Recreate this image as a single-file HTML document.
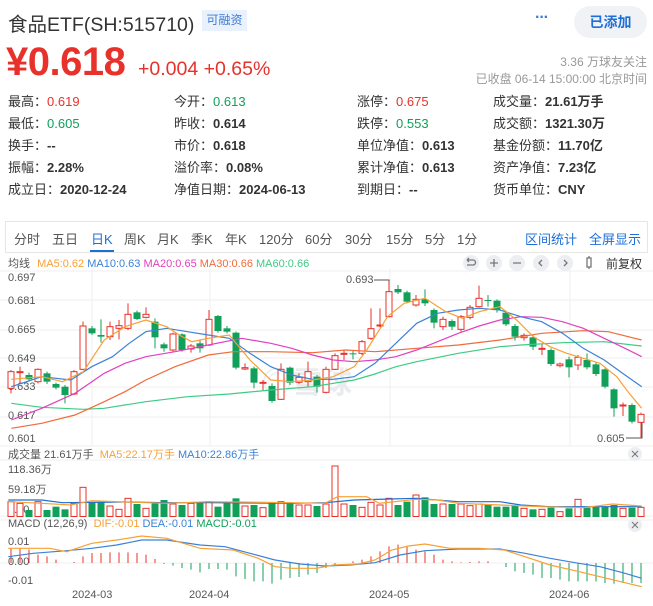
<!DOCTYPE html>
<html><head><meta charset="utf-8">
<style>
*{margin:0;padding:0;box-sizing:border-box}
body{width:653px;height:606px;background:#fff;font-family:"Liberation Sans","Noto Sans CJK SC",sans-serif;color:#333;position:relative;overflow:hidden}
.a{position:absolute;white-space:nowrap}
.st{font-size:13px;line-height:16px}
.st b{font-weight:bold;color:#333}
.r{color:#e8312a}.g{color:#10a05a}
.tab{font-size:13px;color:#555;top:229px}
</style></head><body>
<div class="a" style="left:8px;top:8px;font-size:19.5px;color:#333">食品ETF(SH:515710)</div>
<div class="a" style="left:202px;top:10px;width:45px;height:21px;background:#e9f2fc;color:#3c7bd4;font-size:12px;line-height:21px;text-align:center">可融资</div>
<div class="a" style="left:535px;top:9px;font-size:16px;color:#3c7bd4;font-weight:bold;letter-spacing:-1px">···</div>
<div class="a" style="left:574px;top:6px;width:73px;height:32px;border-radius:16px;background:#f1f2f5;color:#1d6fd8;font-size:14px;font-weight:bold;line-height:32px;text-align:center">已添加</div>
<div class="a r" style="left:6px;top:40px;font-size:40px;font-weight:bold;letter-spacing:-0.5px">¥0.618</div>
<div class="a r" style="left:138px;top:58px;font-size:19.5px">+0.004 +0.65%</div>
<div class="a" style="right:6px;top:53px;font-size:12px;color:#999">3.36 万球友关注</div>
<div class="a" style="right:6px;top:70px;font-size:12px;color:#999">已收盘 06-14 15:00:00 北京时间</div>

<div class="a st" style="left:8px;top:94px">最高：<span class="r">0.619</span></div>
<div class="a st" style="left:8px;top:116px">最低：<span class="g">0.605</span></div>
<div class="a st" style="left:8px;top:138px">换手：<b>--</b></div>
<div class="a st" style="left:8px;top:160px">振幅：<b>2.28%</b></div>
<div class="a st" style="left:8px;top:182px">成立日：<b>2020-12-24</b></div>
<div class="a st" style="left:174px;top:94px">今开：<span class="g">0.613</span></div>
<div class="a st" style="left:174px;top:116px">昨收：<b>0.614</b></div>
<div class="a st" style="left:174px;top:138px">市价：<b>0.618</b></div>
<div class="a st" style="left:174px;top:160px">溢价率：<b>0.08%</b></div>
<div class="a st" style="left:174px;top:182px">净值日期：<b>2024-06-13</b></div>
<div class="a st" style="left:357px;top:94px">涨停：<span class="r">0.675</span></div>
<div class="a st" style="left:357px;top:116px">跌停：<span class="g">0.553</span></div>
<div class="a st" style="left:357px;top:138px">单位净值：<b>0.613</b></div>
<div class="a st" style="left:357px;top:160px">累计净值：<b>0.613</b></div>
<div class="a st" style="left:357px;top:182px">到期日：<b>--</b></div>
<div class="a st" style="left:493px;top:94px">成交量：<b>21.61万手</b></div>
<div class="a st" style="left:493px;top:116px">成交额：<b>1321.30万</b></div>
<div class="a st" style="left:493px;top:138px">基金份额：<b>11.70亿</b></div>
<div class="a st" style="left:493px;top:160px">资产净值：<b>7.23亿</b></div>
<div class="a st" style="left:493px;top:182px">货币单位：<b>CNY</b></div>

<div class="a" style="left:5px;top:221px;width:643px;height:32px;border:1px solid #e6e6e6"></div>
<div class="a tab" style="left:14px">分时</div>
<div class="a tab" style="left:52px">五日</div>
<div class="a tab" style="left:91px;color:#1d6fd8">日K</div>
<div class="a" style="left:90px;top:250px;width:24px;height:2px;background:#1d6fd8"></div>
<div class="a tab" style="left:124px">周K</div>
<div class="a tab" style="left:157px">月K</div>
<div class="a tab" style="left:191px">季K</div>
<div class="a tab" style="left:225px">年K</div>
<div class="a tab" style="left:259px">120分</div>
<div class="a tab" style="left:305px">60分</div>
<div class="a tab" style="left:345px">30分</div>
<div class="a tab" style="left:386px">15分</div>
<div class="a tab" style="left:425px">5分</div>
<div class="a tab" style="left:457px">1分</div>
<div class="a tab" style="left:525px;color:#1d6fd8">区间统计</div>
<div class="a tab" style="left:589px;color:#1d6fd8">全屏显示</div>

<div class="a" style="left:8px;top:255px;font-size:11px;color:#555">均线 <span style="color:#f7a035;margin-left:4px">MA5:0.62</span> <span style="color:#3b82d6">MA10:0.63</span> <span style="color:#e040c0">MA20:0.65</span> <span style="color:#f06a3a">MA30:0.66</span> <span style="color:#3ecb85">MA60:0.66</span></div>
<div class="a" style="left:606px;top:255px;font-size:12px;color:#333">前复权</div>

<svg class="a" style="left:0;top:0" width="653" height="606" id="s">
<g fill="#eceef1"><circle cx="471" cy="263" r="8"/><circle cx="494" cy="263" r="8"/><circle cx="517" cy="263" r="8"/><circle cx="541" cy="263" r="8"/><circle cx="565" cy="263" r="8"/><circle cx="635" cy="454" r="7"/><circle cx="635" cy="525" r="7"/></g>
<g stroke="#777" stroke-width="1.3" fill="none"><path d="M467 260h6a2.5 2.5 0 0 1 0 5h-6M467 260l2-2M467 260l2 2"/><path d="M490 263h8M494 259v8M513 263h8M542 260l-3 3 3 3M564 260l3 3-3 3"/><rect x="587" y="258" width="4" height="9"/><path d="M589 256v2M589 267v2"/><path d="M632 451l6 6M638 451l-6 6M632 522l6 6M638 522l-6 6" stroke-width="1"/></g>
<g stroke="#efefef" stroke-width="1"><path d="M0 271H653M0 300H653M0 330H653M0 358H653M0 387H653M0 417H653M0 446H653"/><path d="M92 268V446M210 268V446M390 268V446M570 268V446"/><path d="M0 460H653M0 516H653M0 520H653M0 563H653"/></g>
<text x="262" y="393" font-size="30" fill="#e9ebef" font-weight="bold" font-family="Liberation Sans,Noto Sans CJK SC,sans-serif">◎雪球</text>
<g font-size="11" fill="#555" font-family="Liberation Sans,sans-serif">
<text x="8" y="281">0.697</text><text x="8" y="304">0.681</text><text x="8" y="333">0.665</text><text x="8" y="362">0.649</text><text x="8" y="390">0.633</text><text x="8" y="419">0.617</text><text x="8" y="442">0.601</text>
<text x="346" y="283">0.693</text><text x="597" y="442">0.605</text>
<text x="8" y="473">118.36万</text><text x="8" y="493">59.18万</text><text x="8" y="513">0.00</text>
<text x="8" y="545">0.01</text><text x="8" y="565">0.00</text><text x="8" y="584">-0.01</text>
<text x="72" y="598">2024-03</text><text x="189" y="598">2024-04</text><text x="369" y="598">2024-05</text><text x="549" y="598">2024-06</text>
</g>
<path d="M374 280H389V291M626 438H642V420" stroke="#555" fill="none" stroke-width="1"/>
<g id="cd"></g>
</svg>
<div class="a" style="left:8px;top:446px;font-size:11px;color:#555">成交量 21.61万手 &nbsp;<span style="color:#f7a035">MA5:22.17万手</span> <span style="color:#3b82d6">MA10:22.86万手</span></div>
<div class="a" style="left:8px;top:518px;font-size:11px;color:#555">MACD (12,26,9) &nbsp;<span style="color:#f7a035">DIF:-0.01</span> <span style="color:#3b82d6">DEA:-0.01</span> <span style="color:#10a05a">MACD:-0.01</span></div>
<script>
var K=[[455,505,450,520,1],[455,458,440,490,1],[465,478,458,485,0],[448,485,445,490,1],[460,485,455,492,0],[492,503,488,508,0],[500,525,495,550,0],[455,522,450,525,1],[318,448,305,450,1],[325,340,318,345,0],[345,350,298,368,0],[320,350,305,360,1],[317,325,300,358,1],[283,325,250,330,1],[277,297,272,300,0],[283,292,262,295,1],[305,352,295,385,0],[373,385,368,395,0],[342,390,338,395,1],[343,390,340,395,0],[378,387,372,398,1],[370,385,360,398,0],[298,375,270,378,1],[288,333,285,338,0],[325,335,318,340,0],[338,443,335,448,0],[443,447,430,450,1],[445,488,440,505,0],[487,490,480,512,1],[498,543,490,548,0],[448,538,430,540,1],[443,488,440,495,0],[472,487,460,492,1],[455,485,425,500,1],[470,500,465,518,0],[448,517,440,520,1],[407,448,400,450,1],[400,402,390,420,1],[400,402,392,418,0],[365,400,360,405,1],[326,355,265,360,1],[315,318,265,322,1],[215,290,185,292,1],[207,217,195,222,0],[217,245,212,250,0],[238,255,225,260,1],[238,250,208,258,0],[270,308,265,325,0],[298,320,290,330,1],[303,320,298,330,0],[290,328,285,335,1],[262,292,255,298,1],[235,260,197,262,1],[240,243,225,260,0],[242,270,238,278,0],[278,313,272,318,0],[318,350,312,362,0],[346,353,340,362,1],[352,380,345,390,0],[385,388,372,405,1],[390,432,385,438,0],[432,437,428,442,1],[418,442,410,472,0],[412,435,405,450,1],[420,442,400,448,0],[433,462,428,468,0],[448,500,445,505,0],[508,565,505,590,0],[555,558,548,588,1],[555,605,550,610,0],[583,607,578,655,1]];
var V=[185,190,210,185,210,200,208,190,142,187,187,198,208,175,192,205,190,180,192,195,190,187,185,200,188,175,198,195,203,190,185,190,195,195,198,192,78,192,195,202,187,195,175,195,185,165,172,192,192,192,192,197,192,192,200,200,197,205,208,208,203,215,205,178,203,200,200,195,205,203,202];
var M=[45,45,40,25,20,10,0,3,20,30,30,32,32,32,30,25,12,-3,-8,-15,-20,-28,-18,-18,-20,-40,-48,-55,-55,-62,-50,-45,-42,-35,-30,-15,-5,0,5,10,20,35,50,55,48,40,35,25,10,5,2,3,5,5,0,-12,-25,-30,-35,-45,-45,-50,-55,-55,-55,-55,-60,-62,-60,-60,-60];
var h='',R='#e8312a',G='#10a05a';
function X(i){return 11+i*9.0}
K.forEach(function(k,i){var x=X(i),c=k[4]?R:G,t=k[0]/3+220,b=k[1]/3+220;
h+='<line x1="'+x+'" x2="'+x+'" y1="'+(k[2]/3+220)+'" y2="'+(k[3]/3+220)+'" stroke="'+c+'"/>';
var hh=Math.max(b-t,1);
h+=k[4]?'<rect x="'+(x-3)+'" y="'+t+'" width="6" height="'+hh+'" fill="#fff" stroke="'+c+'"/>':'<rect x="'+(x-3.5)+'" y="'+t+'" width="7" height="'+hh+'" fill="'+c+'"/>';
var vt=V[i]/3+440;
h+=k[4]?'<rect x="'+(x-3)+'" y="'+vt+'" width="6" height="'+(516.5-vt)+'" fill="#fff" stroke="'+c+'"/>':'<rect x="'+(x-3.5)+'" y="'+vt+'" width="7" height="'+(517-vt)+'" fill="'+c+'"/>';
var m=M[i]/3;h+='<line x1="'+x+'" x2="'+x+'" y1="563" y2="'+(563-m)+'" stroke="'+(m>=0?R:G)+'"/>';});
function L(p,c,oy){var s=[];for(var i=0;i<p.length;i+=2)s.push((p[i]/2.4).toFixed(1)+','+(p[i+1]/3+oy).toFixed(1));h+='<polyline points="'+s.join(' ')+'" fill="none" stroke="'+c+'" stroke-width="1.2"/>';}
L([27,550,100,562,200,568,250,565,350,545,450,530,550,522,650,510,750,500,850,480,900,462,950,440,1000,425,1100,400,1200,380,1250,375,1350,368,1450,365,1540,378],'#3ecb85',220);
L([27,625,100,610,180,585,250,545,300,515,350,480,420,440,500,405,560,395,650,395,750,398,830,390,900,395,1000,385,1100,375,1200,360,1300,340,1400,332,1460,335,1540,360],'#f06a3a',220);
L([27,600,100,565,180,520,250,460,300,430,350,410,420,395,500,375,580,355,650,370,700,385,750,405,800,420,850,425,900,420,950,410,1000,390,1050,365,1100,340,1150,318,1200,300,1250,290,1300,292,1350,305,1400,325,1450,355,1500,385,1540,410],'#e040c0',220);
L([27,500,100,470,170,480,220,440,270,410,310,370,350,335,400,325,450,335,500,345,550,355,600,400,650,440,700,465,750,478,800,478,850,470,900,430,950,370,1000,310,1050,280,1100,270,1150,265,1200,270,1250,290,1300,305,1350,340,1400,385,1450,420,1500,465,1540,500],'#3b82d6',220);
L([27,478,100,470,150,485,200,455,250,360,300,320,350,300,400,320,430,345,460,365,500,355,550,345,600,420,650,480,700,485,750,480,800,470,850,440,880,390,930,290,970,250,1020,235,1070,275,1110,295,1150,275,1200,260,1240,300,1280,350,1320,380,1360,400,1400,415,1440,430,1480,470,1510,520,1540,565],'#f7a035',220);
L([20,180,100,180,150,188,300,186,400,188,500,188,700,190,780,188,850,180,1000,175,1100,185,1200,185,1250,195,1320,200,1400,200,1540,200],'#1f6fd0',440);
L([20,185,100,190,170,195,220,182,300,186,400,190,500,185,700,188,780,190,810,170,880,170,910,190,1000,178,1050,180,1100,190,1200,195,1300,200,1400,203,1470,192,1540,198],'#f7a035',440);
L([20,350,80,340,160,332,220,325,280,315,340,300,400,300,480,315,540,320,600,340,660,360,720,372,780,378,840,375,900,368,960,345,1020,332,1100,327,1200,327,1260,340,1320,355,1380,368,1440,380,1500,400,1540,415],'#3b82d6',440);
L([20,325,120,325,160,335,220,310,280,300,340,288,400,295,480,325,560,330,620,355,660,380,700,385,760,385,800,375,860,372,900,360,940,330,980,318,1020,312,1080,325,1150,325,1210,330,1260,350,1320,375,1380,392,1440,410,1500,428,1540,440],'#f7a035',440);
document.getElementById('cd').innerHTML=h;
</script>
</body></html>
